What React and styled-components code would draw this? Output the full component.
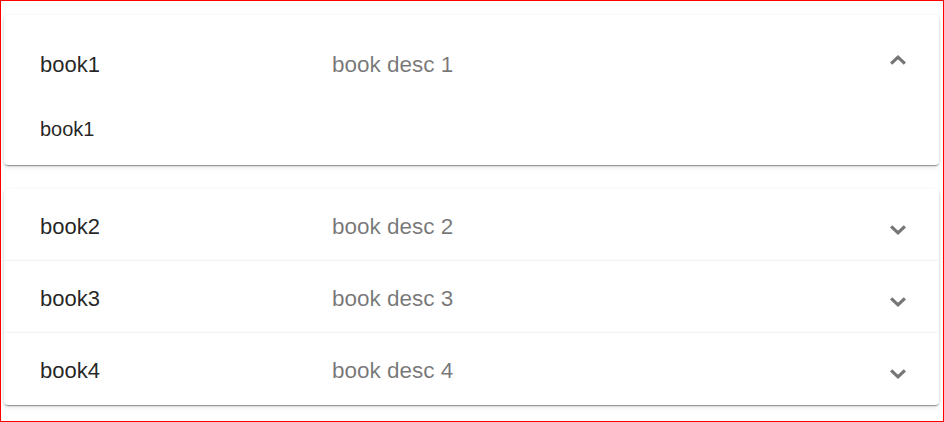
import React, { useState } from 'react';
import styled, { createGlobalStyle } from 'styled-components';

const GlobalStyle = createGlobalStyle`
  html, body {
    margin: 0;
    padding: 0;
    background: #fff;
  }
  body {
    font-family: 'Liberation Sans', Arial, sans-serif;
  }
`;

const Page = styled.div`
  box-sizing: border-box;
  height: 422px;
  border: 1px solid red;
  padding: 14px 4px 0 3px;
`;

const Item = styled.div`
  position: relative;
  background: #fff;
  box-shadow: 0px 2px 1px -1px rgba(0, 0, 0, 0.28),
    0px 1px 2px 0px rgba(0, 0, 0, 0.18), 0px 2px 5px 0px rgba(0, 0, 0, 0.1);
  margin: ${(p) => (p.$expanded ? '0 0 24px' : '0')};
  border-top-left-radius: ${(p) => (p.$roundTop ? '4px' : '0')};
  border-top-right-radius: ${(p) => (p.$roundTop ? '4px' : '0')};
  border-bottom-left-radius: ${(p) => (p.$roundBottom ? '4px' : '0')};
  border-bottom-right-radius: ${(p) => (p.$roundBottom ? '4px' : '0')};

  &::before {
    content: '';
    position: absolute;
    left: 0;
    right: 0;
    top: -1px;
    height: 1px;
    background: rgba(0, 0, 0, 0.025);
    opacity: ${(p) => (p.$roundTop ? 0 : 1)};
  }
`;

const Summary = styled.div`
  display: grid;
  grid-template-columns: 292px 1fr 30px;
  align-items: center;
  box-sizing: border-box;
  height: ${(p) => (p.$expanded ? '96px' : '72px')};
  padding: 3px 26px 0 36px;
  cursor: pointer;
`;

const Title = styled.div`
  font-size: 22px;
  line-height: 24px;
  color: rgba(0, 0, 0, 0.87);
`;

const Desc = styled.div`
  font-size: 22.5px;
  line-height: 24px;
  color: rgba(0, 0, 0, 0.54);
`;

const Chevron = styled.svg`
  width: 30px;
  height: 30px;
  margin-top: -1px;
  fill: none;
  stroke: rgba(0, 0, 0, 0.54);
  stroke-width: 2.6;
  transform: ${(p) => (p.$expanded ? 'rotate(180deg)' : 'none')};
`;

const Details = styled.div`
  padding: 6px 36px 24px;
  font-size: 20px;
  line-height: 24px;
  color: rgba(0, 0, 0, 0.87);
`;

const books = [
  { id: 1, title: 'book1', desc: 'book desc 1', body: 'book1' },
  { id: 2, title: 'book2', desc: 'book desc 2', body: 'book2' },
  { id: 3, title: 'book3', desc: 'book desc 3', body: 'book3' },
  { id: 4, title: 'book4', desc: 'book desc 4', body: 'book4' },
];

export default function App() {
  const [open, setOpen] = useState(1);

  return (
    <>
      <GlobalStyle />
      <Page>
        {books.map((b, i) => {
          const expanded = open === b.id;
          const prevOpen = i > 0 && books[i - 1].id === open;
          const nextOpen = i < books.length - 1 && books[i + 1].id === open;
          return (
            <Item
              key={b.id}
              $expanded={expanded}
              $roundTop={i === 0 || expanded || prevOpen}
              $roundBottom={i === books.length - 1 || expanded || nextOpen}
            >
              <Summary
                $expanded={expanded}
                onClick={() => setOpen(expanded ? null : b.id)}
              >
                <Title>{b.title}</Title>
                <Desc>{b.desc}</Desc>
                <Chevron viewBox="0 0 24 24" $expanded={expanded}>
                  <path d="M6.5 12.3 L12 17.5 L17.5 12.3" />
                </Chevron>
              </Summary>
              {expanded && <Details>{b.body}</Details>}
            </Item>
          );
        })}
      </Page>
    </>
  );
}
